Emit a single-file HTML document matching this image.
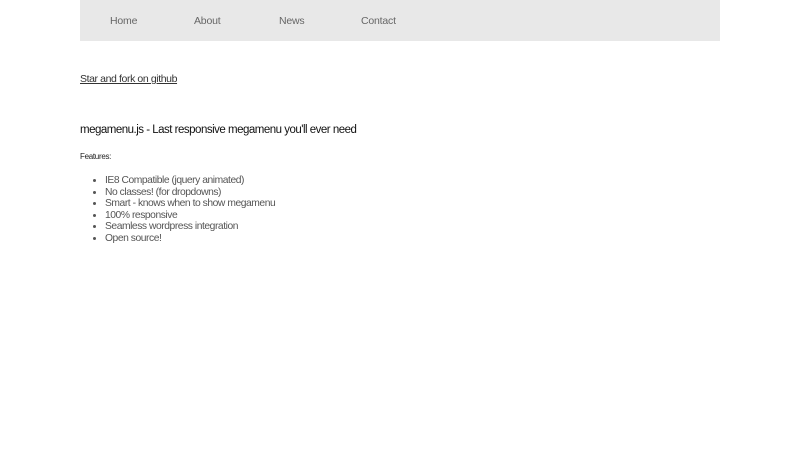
<!DOCTYPE html>
<html><head><style>
body{margin:0;background:#fff;font-family:"Liberation Sans",sans-serif;color:#222;}
.nav{position:absolute;left:80px;top:0;width:640px;height:41px;background:#e8e8e8;}
.nav span{position:absolute;top:15px;font-size:10.5px;color:#666;letter-spacing:-0.2px;}
.a{position:absolute;left:80px;top:73px;font-size:10.5px;color:#333;text-decoration:underline;letter-spacing:-0.4px;}
h1{position:absolute;left:80px;top:124px;margin:0;font-weight:normal;font-size:11.5px;color:#111;letter-spacing:-0.5px;}
.f{position:absolute;left:80px;top:152px;font-size:8px;color:#222;letter-spacing:-0.3px;}
ul{position:absolute;left:80px;top:175px;margin:0;padding-left:25px;font-size:10.3px;line-height:11.5px;color:#555;letter-spacing:-0.45px;}
</style></head><body>
<div class="nav"><span style="left:30px">Home</span><span style="left:114px">About</span><span style="left:199px">News</span><span style="left:281px">Contact</span></div>
<div class="a">Star and fork on github</div>
<h1>megamenu.js - Last responsive megamenu you'll ever need</h1>
<div class="f">Features:</div>
<ul><li>IE8 Compatible (jquery animated)</li><li>No classes! (for dropdowns)</li><li>Smart - knows when to show megamenu</li><li>100% responsive</li><li>Seamless wordpress integration</li><li>Open source!</li></ul>
</body></html>
